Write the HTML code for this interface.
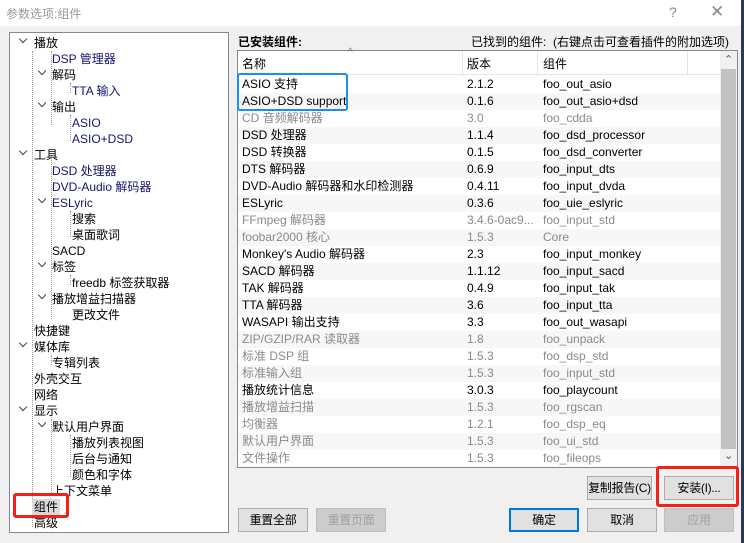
<!DOCTYPE html><html><head><meta charset="utf-8"><style>
*{margin:0;padding:0;box-sizing:border-box}
body{width:744px;height:543px;background:#f0f0f0;font-family:"Liberation Sans","Noto Sans CJK SC",sans-serif;font-size:12px;color:#000;position:relative;overflow:hidden}
.a{position:absolute;white-space:nowrap}
.title{left:0;top:0;width:742px;height:26px;background:#fff}
.tree{left:9px;top:32px;width:220px;height:501px;background:#fff;border:1px solid #828790}
.t{position:absolute;line-height:16px;height:16px;white-space:nowrap}
.n{color:#14146e}
.chev{position:absolute;width:6px;height:6px;border-right:1.5px solid #444;border-bottom:1.5px solid #444;transform:rotate(45deg)}
.list{left:237px;top:50px;width:501px;height:418px;background:#fff;border:1px solid #828790}
.row{position:absolute;left:0;width:482px;height:17px;line-height:17px;white-space:nowrap}
.row span{position:absolute}
.g{color:#8a8a8a}
.btn{position:absolute;height:24px;background:#e1e1e1;border:1px solid #adadad;text-align:center;line-height:22px;font-size:12px;white-space:nowrap;overflow:hidden;letter-spacing:-0.3px}
.dis{color:#a0a0a0;background:#cccccc;border-color:#bfbfbf}
.vl{position:absolute;border-left:1px dotted #999}
</style></head><body>
<div class="a title"></div>
<div class="a" style="left:6px;top:5px;color:#999;font-size:12px">参数选项:组件</div>
<div class="a" style="left:669px;top:4px;color:#888;font-size:14px">?</div>
<div class="a" style="left:710px;top:2px;color:#888;font-size:17px">✕</div>
<div class="a" style="left:741px;top:0;width:3px;height:543px;background:#2a3a50"></div>

<div class="a tree">
<div class="vl" style="left:22px;top:18px;height:476px"></div>
<div class="vl" style="left:60px;top:50px;height:10px"></div>
<div class="vl" style="left:60px;top:82px;height:26px"></div>
<div class="vl" style="left:60px;top:178px;height:26px"></div>
<div class="vl" style="left:60px;top:242px;height:10px"></div>
<div class="vl" style="left:41px;top:122px;height:164px"></div>
<div class="vl" style="left:41px;top:18px;height:74px"></div>
<div class="vl" style="left:41px;top:322px;height:10px"></div>
<div class="vl" style="left:41px;top:386px;height:74px"></div>
<div class="vl" style="left:60px;top:402px;height:42px"></div>
</div>
<div class="a" style="left:9px;top:32px;width:220px;height:501px">
<div class="chev" style="left:11px;top:4px"></div><div class="t" style="left:25px;top:3px">播放</div>
<div class="t n" style="left:43px;top:19px">DSP 管理器</div>
<div class="chev" style="left:30px;top:36px"></div><div class="t" style="left:43px;top:35px">解码</div>
<div class="t n" style="left:63px;top:51px">TTA 输入</div>
<div class="chev" style="left:30px;top:68px"></div><div class="t" style="left:43px;top:67px">输出</div>
<div class="t n" style="left:63px;top:83px">ASIO</div>
<div class="t n" style="left:63px;top:99px">ASIO+DSD</div>
<div class="chev" style="left:11px;top:116px"></div><div class="t" style="left:25px;top:115px">工具</div>
<div class="t n" style="left:43px;top:131px">DSD 处理器</div>
<div class="t n" style="left:43px;top:147px">DVD-Audio 解码器</div>
<div class="chev" style="left:30px;top:164px"></div><div class="t n" style="left:43px;top:163px">ESLyric</div>
<div class="t" style="left:63px;top:179px">搜索</div>
<div class="t" style="left:63px;top:195px">桌面歌词</div>
<div class="t" style="left:43px;top:211px">SACD</div>
<div class="chev" style="left:30px;top:228px"></div><div class="t" style="left:43px;top:227px">标签</div>
<div class="t" style="left:63px;top:243px">freedb 标签获取器</div>
<div class="chev" style="left:30px;top:260px"></div><div class="t" style="left:43px;top:259px">播放增益扫描器</div>
<div class="t" style="left:63px;top:275px">更改文件</div>
<div class="t" style="left:25px;top:291px">快捷键</div>
<div class="chev" style="left:11px;top:308px"></div><div class="t" style="left:25px;top:307px">媒体库</div>
<div class="t" style="left:43px;top:323px">专辑列表</div>
<div class="t" style="left:25px;top:339px">外壳交互</div>
<div class="t" style="left:25px;top:355px">网络</div>
<div class="chev" style="left:11px;top:372px"></div><div class="t" style="left:25px;top:371px">显示</div>
<div class="chev" style="left:30px;top:388px"></div><div class="t" style="left:43px;top:387px">默认用户界面</div>
<div class="t" style="left:63px;top:403px">播放列表视图</div>
<div class="t" style="left:63px;top:419px">后台与通知</div>
<div class="t" style="left:63px;top:435px">颜色和字体</div>
<div class="t" style="left:43px;top:451px">上下文菜单</div>
<div class="t" style="left:23px;top:467px;background:#d9d9d9;padding:0 2px">组件</div>
<div class="t" style="left:25px;top:483px">高级</div>
</div>
<div class="a" style="left:13px;top:493px;width:56px;height:25px;border:3px solid #f0201a;border-radius:3px"></div>

<div class="a" style="left:238px;top:33px;font-weight:bold">已安装组件:</div>
<div class="a" style="left:471px;top:33px">已找到的组件:&nbsp; (右键点击可查看插件的附加选项)</div>
<div class="a list">
<div class="a" style="left:0;top:0;width:482px;height:24px;border-bottom:1px solid #e5e5e5"></div>
<div class="a" style="left:224px;top:0;height:416px;border-left:1px solid #e5e5e5"></div>
<div class="a" style="left:299px;top:0;height:416px;border-left:1px solid #e5e5e5"></div>
<div class="a" style="left:449px;top:0;height:24px;border-left:1px solid #e5e5e5"></div>
<div class="a" style="left:110px;top:-4px;color:#777;font-size:10px">^</div>
<div class="a" style="left:4px;top:4px">名称</div>
<div class="a" style="left:229px;top:4px">版本</div>
<div class="a" style="left:305px;top:4px">组件</div>
<div class="a" style="left:482px;top:0;width:17px;height:416px;background:#f0f0f0"></div>
<div class="a" style="left:486px;top:2px;color:#555;font-size:11px">⌃</div>
<div class="a" style="left:483px;top:18px;width:15px;height:380px;background:#c2c2c2"></div>
<div class="a" style="left:486px;top:398px;color:#555;font-size:11px">⌄</div>
<div id="rows"></div>
</div>
<div class="a" style="left:237px;top:73px;width:111px;height:38px;border:2px solid #1e8fe8;border-radius:3px"></div>

<div class="btn" style="left:587px;top:476px;width:65px">复制报告(C)</div>
<div class="btn" style="left:664px;top:476px;width:70px">安装(I)...</div>
<div class="a" style="left:656px;top:466px;width:83px;height:41px;border:3px solid #f0201a;border-radius:3px"></div>
<div class="btn" style="left:238px;top:508px;width:70px">重置全部</div>
<div class="btn dis" style="left:316px;top:508px;width:70px">重置页面</div>
<div class="btn" style="left:509px;top:508px;width:70px;border:2px solid #0078d7;line-height:20px">确定</div>
<div class="btn" style="left:587px;top:508px;width:70px">取消</div>
<div class="btn dis" style="left:664px;top:508px;width:70px">应用</div>
<script>
var d=[["ASIO 支持","2.1.2","foo_out_asio",0],["ASIO+DSD support","0.1.6","foo_out_asio+dsd",0],["CD 音频解码器","3.0","foo_cdda",1],["DSD 处理器","1.1.4","foo_dsd_processor",0],["DSD 转换器","0.1.5","foo_dsd_converter",0],["DTS 解码器","0.6.9","foo_input_dts",0],["DVD-Audio 解码器和水印检测器","0.4.11","foo_input_dvda",0],["ESLyric","0.3.6","foo_uie_eslyric",0],["FFmpeg 解码器","3.4.6-0ac9...","foo_input_std",1],["foobar2000 核心","1.5.3","Core",1],["Monkey's Audio 解码器","2.3","foo_input_monkey",0],["SACD 解码器","1.1.12","foo_input_sacd",0],["TAK 解码器","0.4.9","foo_input_tak",0],["TTA 解码器","3.6","foo_input_tta",0],["WASAPI 输出支持","3.3","foo_out_wasapi",0],["ZIP/GZIP/RAR 读取器","1.8","foo_unpack",1],["标准 DSP 组","1.5.3","foo_dsp_std",1],["标准输入组","1.5.3","foo_input_std",1],["播放统计信息","3.0.3","foo_playcount",0],["播放增益扫描","1.5.3","foo_rgscan",1],["均衡器","1.2.1","foo_dsp_eq",1],["默认用户界面","1.5.3","foo_ui_std",1],["文件操作","1.5.3","foo_fileops",1]];
var h="";d.forEach(function(r,i){h+='<div class="row'+(r[3]?' g':'')+'" style="top:'+(25+i*17)+'px;background:'+(i%2?'#f7f7f7':'#fff')+'"><span style="left:4px">'+r[0]+'</span><span style="left:229px">'+r[1]+'</span><span style="left:305px">'+r[2]+'</span></div>'});
document.getElementById("rows").innerHTML=h;
</script>
</body></html>
